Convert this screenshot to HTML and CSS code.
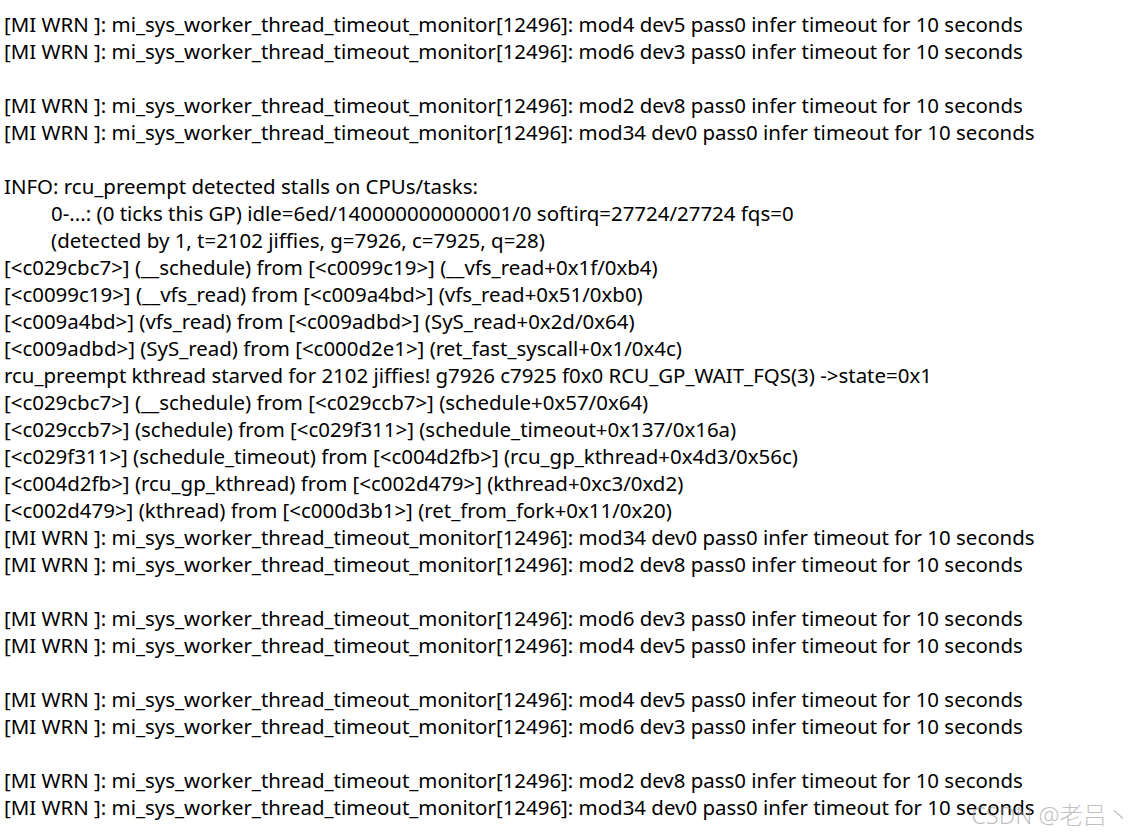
FILE: index.html
```html
<!DOCTYPE html>
<html>
<head>
<meta charset="utf-8">
<link rel="stylesheet" href="styles.css">
</head>
<body>
<div class="log">
<div class="line">[MI WRN ]: mi_sys_worker_thread_timeout_monitor[12496]: mod4 dev5 pass0 infer timeout for 10 seconds</div>
<div class="line">[MI WRN ]: mi_sys_worker_thread_timeout_monitor[12496]: mod6 dev3 pass0 infer timeout for 10 seconds</div>
<div class="line blank"></div>
<div class="line">[MI WRN ]: mi_sys_worker_thread_timeout_monitor[12496]: mod2 dev8 pass0 infer timeout for 10 seconds</div>
<div class="line">[MI WRN ]: mi_sys_worker_thread_timeout_monitor[12496]: mod34 dev0 pass0 infer timeout for 10 seconds</div>
<div class="line blank"></div>
<div class="line">INFO: rcu_preempt detected stalls on CPUs/tasks:</div>
<div class="line indent">0-...: (0 ticks this GP) idle=6ed/140000000000001/0 softirq=27724/27724 fqs=0</div>
<div class="line indent">(detected by 1, t=2102 jiffies, g=7926, c=7925, q=28)</div>
<div class="line">[&lt;c029cbc7&gt;] (__schedule) from [&lt;c0099c19&gt;] (__vfs_read+0x1f/0xb4)</div>
<div class="line">[&lt;c0099c19&gt;] (__vfs_read) from [&lt;c009a4bd&gt;] (vfs_read+0x51/0xb0)</div>
<div class="line">[&lt;c009a4bd&gt;] (vfs_read) from [&lt;c009adbd&gt;] (SyS_read+0x2d/0x64)</div>
<div class="line">[&lt;c009adbd&gt;] (SyS_read) from [&lt;c000d2e1&gt;] (ret_fast_syscall+0x1/0x4c)</div>
<div class="line">rcu_preempt kthread starved for 2102 jiffies! g7926 c7925 f0x0 RCU_GP_WAIT_FQS(3) -&gt;state=0x1</div>
<div class="line">[&lt;c029cbc7&gt;] (__schedule) from [&lt;c029ccb7&gt;] (schedule+0x57/0x64)</div>
<div class="line">[&lt;c029ccb7&gt;] (schedule) from [&lt;c029f311&gt;] (schedule_timeout+0x137/0x16a)</div>
<div class="line">[&lt;c029f311&gt;] (schedule_timeout) from [&lt;c004d2fb&gt;] (rcu_gp_kthread+0x4d3/0x56c)</div>
<div class="line">[&lt;c004d2fb&gt;] (rcu_gp_kthread) from [&lt;c002d479&gt;] (kthread+0xc3/0xd2)</div>
<div class="line">[&lt;c002d479&gt;] (kthread) from [&lt;c000d3b1&gt;] (ret_from_fork+0x11/0x20)</div>
<div class="line">[MI WRN ]: mi_sys_worker_thread_timeout_monitor[12496]: mod34 dev0 pass0 infer timeout for 10 seconds</div>
<div class="line">[MI WRN ]: mi_sys_worker_thread_timeout_monitor[12496]: mod2 dev8 pass0 infer timeout for 10 seconds</div>
<div class="line blank"></div>
<div class="line">[MI WRN ]: mi_sys_worker_thread_timeout_monitor[12496]: mod6 dev3 pass0 infer timeout for 10 seconds</div>
<div class="line">[MI WRN ]: mi_sys_worker_thread_timeout_monitor[12496]: mod4 dev5 pass0 infer timeout for 10 seconds</div>
<div class="line blank"></div>
<div class="line">[MI WRN ]: mi_sys_worker_thread_timeout_monitor[12496]: mod4 dev5 pass0 infer timeout for 10 seconds</div>
<div class="line">[MI WRN ]: mi_sys_worker_thread_timeout_monitor[12496]: mod6 dev3 pass0 infer timeout for 10 seconds</div>
<div class="line blank"></div>
<div class="line">[MI WRN ]: mi_sys_worker_thread_timeout_monitor[12496]: mod2 dev8 pass0 infer timeout for 10 seconds</div>
<div class="line">[MI WRN ]: mi_sys_worker_thread_timeout_monitor[12496]: mod34 dev0 pass0 infer timeout for 10 seconds</div>
</div>
<div class="watermark">CSDN @老吕丶</div>
</body>
</html>
```
FILE: styles.css
```css
html, body {
  margin: 0;
  padding: 0;
  background: #ffffff;
  overflow: hidden;
}
body {
  width: 1139px;
  height: 835px;
  position: relative;
}
.log {
  padding: 11px 0 0 4px;
  font-family: "Noto Sans", "Noto Sans CJK SC", sans-serif;
  font-size: 20.45px;
  line-height: 27px;
  color: #000000;
}
.line {
  height: 27px;
  white-space: pre;
}
.indent {
  padding-left: 47px;
}
.watermark {
  position: absolute;
  right: 9px;
  bottom: 5px;
  font-family: "Noto Sans", "Noto Sans CJK SC", sans-serif;
  font-size: 23.5px;
  font-weight: 300;
  line-height: 30px;
  color: rgba(150, 150, 150, 0.6);
}
```
